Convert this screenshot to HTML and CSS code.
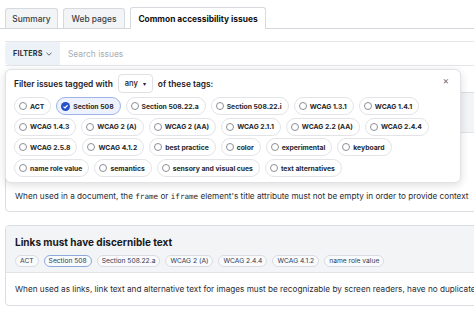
FILE: index.html
```html
<!DOCTYPE html>
<html lang="en">
<head>
  <meta charset="UTF-8">
  <meta name="viewport" content="width=device-width, initial-scale=1.0">
  <title>Accessibility report</title>
  <link rel="stylesheet" href="styles.css">
</head>
<body>
  <div class="page">
    <div class="tabs">
      <div class="tab tab-summary">Summary</div>
      <div class="tab tab-pages">Web pages</div>
      <div class="tab tab-issues active">Common accessibility issues</div>
    </div>

    <div class="filter-bar">
      <button class="filters-btn">FILTERS
        <svg width="6" height="4" viewBox="0 0 6 4"><path d="M0.5 0.8 L3 3.2 L5.5 0.8" fill="none" stroke="#555" stroke-width="0.9"/></svg>
      </button>
      <input class="search" type="text" placeholder="Search issues">
    </div>

    <div class="issues">
      <div class="card card-first">
        <div class="card-head"></div>
        <div class="card-body">When used in a document, the <code>frame</code> or <code>iframe</code> element's title attribute must not be empty in order to provide context</div>
      </div>

      <div class="card">
        <div class="card-head">
          <h2>Links must have discernible text</h2>
          <div class="tags">
            <span class="tag">ACT</span>
            <span class="tag on">Section 508</span>
            <span class="tag">Section 508.22.a</span>
            <span class="tag">WCAG 2 (A)</span>
            <span class="tag">WCAG 2.4.4</span>
            <span class="tag">WCAG 4.1.2</span>
            <span class="tag">name role value</span>
          </div>
        </div>
        <div class="card-body">When used as links, link text and alternative text for images must be recognizable by screen readers, have no duplicate</div>
      </div>
    </div>

    <!-- tag filter popover, open over the issue list -->
    <div class="popover">
      <span class="close">&times;</span>
      <div class="pop-head">
        <span>Filter issues tagged with</span>
        <span class="select">any <span class="caret">&#9662;</span></span>
        <span>of these tags:</span>
      </div>
      <div class="chip-rows">
        <div class="row">
          <span class="chip"><i class="radio"></i>ACT</span>
          <span class="chip on"><svg class="check" width="9" height="9" viewBox="0 0 10 10"><circle cx="5" cy="5" r="5" fill="#2450c8"/><path d="M2.8 5.1 L4.4 6.6 L7.3 3.6" fill="none" stroke="#fff" stroke-width="1.3"/></svg>Section 508</span>
          <span class="chip"><i class="radio"></i>Section 508.22.a</span>
          <span class="chip"><i class="radio"></i>Section 508.22.i</span>
          <span class="chip"><i class="radio"></i>WCAG 1.3.1</span>
          <span class="chip"><i class="radio"></i>WCAG 1.4.1</span>
        </div>
        <div class="row">
          <span class="chip"><i class="radio"></i>WCAG 1.4.3</span>
          <span class="chip"><i class="radio"></i>WCAG 2 (A)</span>
          <span class="chip"><i class="radio"></i>WCAG 2 (AA)</span>
          <span class="chip"><i class="radio"></i>WCAG 2.1.1</span>
          <span class="chip"><i class="radio"></i>WCAG 2.2 (AA)</span>
          <span class="chip"><i class="radio"></i>WCAG 2.4.4</span>
        </div>
        <div class="row">
          <span class="chip"><i class="radio"></i>WCAG 2.5.8</span>
          <span class="chip"><i class="radio"></i>WCAG 4.1.2</span>
          <span class="chip"><i class="radio"></i>best practice</span>
          <span class="chip"><i class="radio"></i>color</span>
          <span class="chip"><i class="radio"></i>experimental</span>
          <span class="chip"><i class="radio"></i>keyboard</span>
        </div>
        <div class="row">
          <span class="chip"><i class="radio"></i>name role value</span>
          <span class="chip"><i class="radio"></i>semantics</span>
          <span class="chip"><i class="radio"></i>sensory and visual cues</span>
          <span class="chip"><i class="radio"></i>text alternatives</span>
        </div>
      </div>
    </div>
  </div>
</body>
</html>
```

FILE: styles.css
```css
body {
  margin: 0;
  font-family: Inter, "Liberation Sans", sans-serif;
  color: #1f2328;
  background: #fff;
  overflow: hidden;
}

.page {
  position: relative;
  width: 700px;
  padding-top: 7px;
}

/* Tabs */
.tabs {
  display: flex;
  gap: 5px;
  height: 21px;
  padding-left: 5px;
  border-bottom: 1px solid #d3d6db;
}

.tab {
  display: flex;
  align-items: center;
  justify-content: center;
  box-sizing: border-box;
  margin-top: 1px;
  background: #f3f4f6;
  border: 1px solid #d6d9de;
  border-bottom: none;
  border-radius: 3px 3px 0 0;
  font-size: 8.4px;
  font-weight: 500;
  color: #3a3d42;
}

.tab-summary { width: 53px; }
.tab-pages { width: 62px; }
.tab-issues { width: 136px; }

.tab.active {
  margin-top: 0;
  height: 22px;
  background: #fff;
  font-weight: 700;
  color: #111;
}

/* Filter bar */
.filter-bar {
  display: flex;
  height: 23px;
  margin: 12px 0 0 5px;
  border-top: 1px solid #e4e6e9;
  border-bottom: 1px solid #e4e6e9;
}

.filters-btn {
  display: flex;
  align-items: center;
  gap: 3px;
  width: 55px;
  padding: 0 0 0 8px;
  border: none;
  border-radius: 4px 0 0 4px;
  background: #edf2f9;
  font-family: inherit;
  font-size: 7.2px;
  font-weight: 700;
  letter-spacing: 0.2px;
  color: #2b2f36;
}

.search {
  flex: 1;
  border: none;
  padding: 0 8px;
  font-family: inherit;
  font-size: 8.4px;
  outline: none;
}

.search::placeholder {
  color: #a9adb4;
}

/* Issue cards */
.issues {
  padding-left: 5px;
  margin-top: 26px;
}

.card {
  width: 640px;
  border: 1px solid #dadde2;
  border-radius: 4px;
  overflow: hidden;
  margin-bottom: 13px;
}

.card-head {
  padding: 10px 9px 5px;
  background: #f3f4f6;
  border-bottom: 1px solid #e1e3e7;
}

.card-first .card-head {
  height: 40px;
  padding: 0;
  box-sizing: border-box;
}

.card h2 {
  margin: 0;
  font-size: 10px;
  line-height: 13px;
  font-weight: 700;
  color: #16181c;
}

.card-body {
  padding: 11px 9px 10px;
  font-size: 8.2px;
  line-height: 11px;
  white-space: nowrap;
  color: #2a2d33;
}

.card-first .card-body {
  padding-top: 58px;
  padding-bottom: 9px;
}

.card-body code {
  font-family: "DejaVu Sans Mono", "Liberation Mono", monospace;
  font-size: 7.6px;
}

.tags {
  display: flex;
  gap: 5px;
  margin-top: 6px;
}

.tag {
  display: flex;
  align-items: center;
  height: 12px;
  box-sizing: border-box;
  padding: 0 4px;
  border: 1px solid #d9dce2;
  border-radius: 7px;
  background: #f9fafb;
  font-size: 6.7px;
  color: #2f3b58;
}

.tag.on {
  border-color: #8ea8de;
}

/* Popover */
.popover {
  position: absolute;
  left: 5px;
  top: 69px;
  width: 456px;
  height: 114px;
  box-sizing: border-box;
  padding: 4px 8px;
  background: #fff;
  border: 1px solid #e0e2e6;
  border-radius: 6px;
  box-shadow: 0 2px 8px rgba(0, 0, 0, 0.14);
}

.close {
  position: absolute;
  top: 4px;
  right: 11px;
  font-size: 10px;
  color: #6f737a;
}

.pop-head {
  display: flex;
  align-items: center;
  gap: 5px;
  font-size: 8.4px;
  font-weight: 600;
  color: #1d2025;
}

.select {
  display: flex;
  align-items: center;
  gap: 5px;
  width: 35px;
  height: 19px;
  box-sizing: border-box;
  padding-left: 6px;
  border: 1px solid #dfe1e5;
  border-radius: 4px;
  font-weight: 500;
  font-size: 7.6px;
}

.caret {
  font-size: 6px;
}

.chip-rows {
  display: flex;
  flex-direction: column;
  gap: 2.7px;
  margin-top: 4px;
}

.row {
  display: flex;
  gap: 5px;
}

.chip {
  display: flex;
  align-items: center;
  gap: 3px;
  height: 18px;
  box-sizing: border-box;
  padding: 0 6px 0 4px;
  border: 1px solid #e2e4e8;
  border-radius: 9px;
  font-size: 6.8px;
  font-weight: 700;
  color: #24272c;
}

.radio {
  width: 8px;
  height: 8px;
  box-sizing: border-box;
  border: 1px solid #8c9098;
  border-radius: 50%;
}

.chip.on {
  border-color: #9fb5e6;
  background: #edf2fc;
}
```
